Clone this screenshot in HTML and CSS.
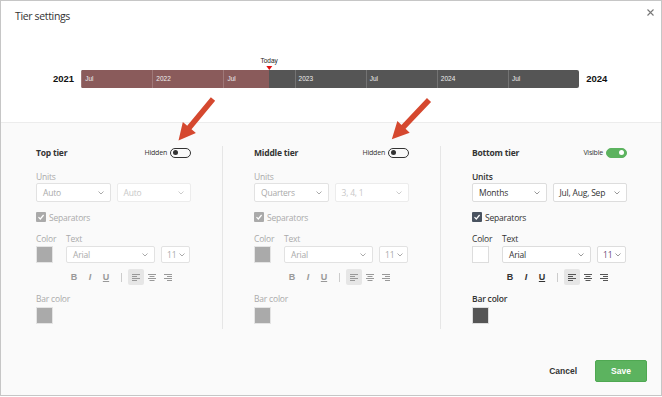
FILE: index.html
```html
<html>

<head>
    <link rel="stylesheet" href="styles.css">
</head>

<body>
    <div class="dialog">
        <div class="head">
            <div class="title">Tier settings</div>
            <svg class="close" width="7" height="7" viewBox="0 0 7 7"><path d="M0.5 0.5 L6.5 6.5 M6.5 0.5 L0.5 6.5" stroke="#777" stroke-width="1.1"/></svg>

            <div class="timeline">
                <span class="year">2021</span>
                <div class="bar">
                    <div class="progress" style="width:188px"></div>
                    <div class="today" style="left:188px"><span>Today</span><i></i></div>
                    <div class="seg">Jul</div>
                    <div class="seg">2022</div>
                    <div class="seg">Jul</div>
                    <div class="seg">2023</div>
                    <div class="seg">Jul</div>
                    <div class="seg">2024</div>
                    <div class="seg">Jul</div>
                </div>
                <span class="year year-end">2024</span>
            </div>
        </div>

        <div class="panel">
            <div class="tiers">

                <div class="tier off">
                    <div class="tier-head">
                        <span class="tier-name">Top tier</span>
                        <span class="state">Hidden <span class="toggle"></span></span>
                    </div>
                    <div class="lbl">Units</div>
                    <div class="sel-row">
                        <div class="sel">Auto<svg width="6" height="4"><path d="M0.5 0.5 L3 3 L5.5 0.5" fill="none" stroke="#aaa"/></svg></div>
                        <div class="sel faint">Auto<svg width="6" height="4"><path d="M0.5 0.5 L3 3 L5.5 0.5" fill="none" stroke="#ccc"/></svg></div>
                    </div>
                    <div class="check-row">
                        <span class="cb"><svg width="8" height="8"><polyline points="1.5,4.2 3.3,6 6.6,2" fill="none" stroke="#fff" stroke-width="1.2"/></svg></span>
                        <span>Separators</span>
                    </div>
                    <div class="lbl-row"><span class="lbl-color">Color</span><span>Text</span></div>
                    <div class="text-row">
                        <span class="swatch"></span>
                        <div class="sel font">Arial<svg width="6" height="4"><path d="M0.5 0.5 L3 3 L5.5 0.5" fill="none" stroke="#aaa"/></svg></div>
                        <div class="sel size">11<svg width="6" height="4"><path d="M0.5 0.5 L3 3 L5.5 0.5" fill="none" stroke="#aaa"/></svg></div>
                    </div>
                    <div class="fmt-row">
                        <span class="fb b">B</span>
                        <span class="fb i">I</span>
                        <span class="fb u">U</span>
                        <span class="fsep"></span>
                        <span class="fb active"><svg width="8" height="7"><path d="M0 0.5 H8 M0 2.5 H5 M0 4.5 H8 M0 6.5 H5" stroke="#999"/></svg></span>
                        <span class="fb"><svg width="8" height="7"><path d="M0 0.5 H8 M1.5 2.5 H6.5 M0 4.5 H8 M1.5 6.5 H6.5" stroke="#999"/></svg></span>
                        <span class="fb"><svg width="8" height="7"><path d="M0 0.5 H8 M3 2.5 H8 M0 4.5 H8 M3 6.5 H8" stroke="#999"/></svg></span>
                    </div>
                    <div class="lbl lbl-bar">Bar color</div>
                    <span class="swatch bar-swatch"></span>
                </div>

                <div class="tier off">
                    <div class="tier-head">
                        <span class="tier-name">Middle tier</span>
                        <span class="state">Hidden <span class="toggle"></span></span>
                    </div>
                    <div class="lbl">Units</div>
                    <div class="sel-row">
                        <div class="sel">Quarters<svg width="6" height="4"><path d="M0.5 0.5 L3 3 L5.5 0.5" fill="none" stroke="#aaa"/></svg></div>
                        <div class="sel faint">3, 4, 1<svg width="6" height="4"><path d="M0.5 0.5 L3 3 L5.5 0.5" fill="none" stroke="#ccc"/></svg></div>
                    </div>
                    <div class="check-row">
                        <span class="cb"><svg width="8" height="8"><polyline points="1.5,4.2 3.3,6 6.6,2" fill="none" stroke="#fff" stroke-width="1.2"/></svg></span>
                        <span>Separators</span>
                    </div>
                    <div class="lbl-row"><span class="lbl-color">Color</span><span>Text</span></div>
                    <div class="text-row">
                        <span class="swatch"></span>
                        <div class="sel font">Arial<svg width="6" height="4"><path d="M0.5 0.5 L3 3 L5.5 0.5" fill="none" stroke="#aaa"/></svg></div>
                        <div class="sel size">11<svg width="6" height="4"><path d="M0.5 0.5 L3 3 L5.5 0.5" fill="none" stroke="#aaa"/></svg></div>
                    </div>
                    <div class="fmt-row">
                        <span class="fb b">B</span>
                        <span class="fb i">I</span>
                        <span class="fb u">U</span>
                        <span class="fsep"></span>
                        <span class="fb active"><svg width="8" height="7"><path d="M0 0.5 H8 M0 2.5 H5 M0 4.5 H8 M0 6.5 H5" stroke="#999"/></svg></span>
                        <span class="fb"><svg width="8" height="7"><path d="M0 0.5 H8 M1.5 2.5 H6.5 M0 4.5 H8 M1.5 6.5 H6.5" stroke="#999"/></svg></span>
                        <span class="fb"><svg width="8" height="7"><path d="M0 0.5 H8 M3 2.5 H8 M0 4.5 H8 M3 6.5 H8" stroke="#999"/></svg></span>
                    </div>
                    <div class="lbl lbl-bar">Bar color</div>
                    <span class="swatch bar-swatch"></span>
                </div>

                <div class="tier on">
                    <div class="tier-head">
                        <span class="tier-name">Bottom tier</span>
                        <span class="state">Visible <span class="toggle"></span></span>
                    </div>
                    <div class="lbl">Units</div>
                    <div class="sel-row">
                        <div class="sel">Months<svg width="6" height="4"><path d="M0.5 0.5 L3 3 L5.5 0.5" fill="none" stroke="#999"/></svg></div>
                        <div class="sel">Jul, Aug, Sep<svg width="6" height="4"><path d="M0.5 0.5 L3 3 L5.5 0.5" fill="none" stroke="#999"/></svg></div>
                    </div>
                    <div class="check-row">
                        <span class="cb"><svg width="8" height="8"><polyline points="1.5,4.2 3.3,6 6.6,2" fill="none" stroke="#fff" stroke-width="1.2"/></svg></span>
                        <span>Separators</span>
                    </div>
                    <div class="lbl-row"><span class="lbl-color">Color</span><span>Text</span></div>
                    <div class="text-row">
                        <span class="swatch"></span>
                        <div class="sel font">Arial<svg width="6" height="4"><path d="M0.5 0.5 L3 3 L5.5 0.5" fill="none" stroke="#999"/></svg></div>
                        <div class="sel size">11<svg width="6" height="4"><path d="M0.5 0.5 L3 3 L5.5 0.5" fill="none" stroke="#999"/></svg></div>
                    </div>
                    <div class="fmt-row">
                        <span class="fb b">B</span>
                        <span class="fb i">I</span>
                        <span class="fb u">U</span>
                        <span class="fsep"></span>
                        <span class="fb active"><svg width="8" height="7"><path d="M0 0.5 H8 M0 2.5 H5 M0 4.5 H8 M0 6.5 H5" stroke="#555"/></svg></span>
                        <span class="fb"><svg width="8" height="7"><path d="M0 0.5 H8 M1.5 2.5 H6.5 M0 4.5 H8 M1.5 6.5 H6.5" stroke="#555"/></svg></span>
                        <span class="fb"><svg width="8" height="7"><path d="M0 0.5 H8 M3 2.5 H8 M0 4.5 H8 M3 6.5 H8" stroke="#555"/></svg></span>
                    </div>
                    <div class="lbl lbl-bar">Bar color</div>
                    <span class="swatch bar-swatch"></span>
                </div>

            </div>

            <div class="footer">
                <span class="cancel">Cancel</span>
                <span class="save">Save</span>
            </div>
        </div>

        <svg class="arrows" width="662" height="397">
            <polygon points="0,-2.8 37,-2.8 37,-8.5 54,0 37,8.5 37,2.8 0,2.8" fill="#d5482f" transform="translate(213 99) rotate(129.7)"/>
            <polygon points="0,-2.8 37,-2.8 37,-8.5 54,0 37,8.5 37,2.8 0,2.8" fill="#d5482f" transform="translate(429 100) rotate(133.5)"/>
        </svg>
    </div>
</body>

</html>
```

FILE: styles.css
```css
*{
    box-sizing: border-box;
}

body{
    margin: 0;
    font-family: "Open Sans", sans-serif;
    color: #333;
    background: #fff;
}

.dialog{
    position: relative;
    width: 662px;
    height: 396px;
    border: 1px solid #c6c6c6;
    display: flex;
    flex-direction: column;
    overflow: hidden;
}

.head{
    height: 121px;
    padding: 7px 14px 0;
    background: #fff;
}

.title{
    font-size: 10.5px;
    line-height: 16px;
    letter-spacing: -0.35px;
    color: #333;
}

.close{
    position: absolute;
    top: 8px;
    right: 7px;
}

.timeline{
    display: flex;
    align-items: center;
    margin: 46px 0 0 38px;
}

.year{
    font-family: "Liberation Sans", Arial, sans-serif;
    font-weight: bold;
    font-size: 9.5px;
    line-height: 18px;
    color: #111;
    margin-right: 7px;
}

.year-end{
    margin: 0 0 0 7px;
}

.bar{
    position: relative;
    display: flex;
    width: 498px;
    height: 18px;
    background: #555;
    border-radius: 2px;
}

.progress{
    position: absolute;
    left: 0;
    top: 0;
    bottom: 0;
    background: #8a5b5b;
    border-radius: 2px 0 0 2px;
}

.seg{
    position: relative;
    flex: 1;
    padding-left: 3px;
    font-family: "Liberation Sans", Arial, sans-serif;
    font-size: 6.5px;
    line-height: 18px;
    color: #eee;
    border-left: 1px solid rgba(255, 255, 255, 0.18);
}

.seg:first-of-type{
    border-left: none;
}

.today{
    position: absolute;
    bottom: 100%;
    display: flex;
    flex-direction: column;
    align-items: center;
    transform: translateX(-50%);
    z-index: 2;
}

.today span{
    font-family: "Liberation Sans", Arial, sans-serif;
    font-size: 6.5px;
    line-height: 7px;
    color: #222;
}

.today i{
    margin-top: 2px;
    width: 0;
    height: 0;
    border-top: 4px solid #e01010;
    border-left: 3px solid transparent;
    border-right: 3px solid transparent;
}

.panel{
    flex: 1;
    display: flex;
    flex-direction: column;
    background: #fafafa;
    border-top: 1px solid #ececec;
}

.tiers{
    display: flex;
    margin-top: 23px;
    padding-left: 35px;
}

.tier{
    flex: none;
    width: 218px;
    height: 183px;
    padding: 0 31px;
    border-left: 1px solid #e6e6e6;
    font-size: 8.5px;
    letter-spacing: -0.2px;
}

.tier:first-child{
    width: 186px;
    padding-left: 0;
    border-left: none;
}

.tier:last-child{
    width: 187px;
    padding-right: 0;
}

.tier-head{
    display: flex;
    justify-content: space-between;
    align-items: center;
    height: 13px;
}

.tier-name{
    font-weight: 700;
    color: #333;
}

.state{
    display: flex;
    align-items: center;
    font-size: 7px;
    color: #333;
}

.toggle{
    position: relative;
    display: inline-block;
    width: 21px;
    height: 10px;
    margin-left: 3px;
    border: 1.3px solid #333;
    border-radius: 5px;
}

.toggle::after{
    content: "";
    position: absolute;
    left: 2px;
    top: 1.2px;
    width: 5px;
    height: 5px;
    border-radius: 50%;
    background: #333;
}

.on .toggle{
    border-color: #5cb35f;
    background: #5cb35f;
}

.on .toggle::after{
    left: auto;
    right: 2px;
    background: #fff;
}

.lbl{
    margin-top: 12px;
    line-height: 12px;
    font-weight: 600;
}

.lbl-bar{
    margin-top: 8px;
}

.sel-row{
    display: flex;
    gap: 6px;
}

.sel{
    position: relative;
    flex: 1;
    height: 19px;
    padding-left: 6px;
    line-height: 17px;
    background: #fff;
    border: 1px solid #ddd;
    border-radius: 2px;
    color: #333;
}

.sel svg{
    position: absolute;
    right: 6px;
    top: 7px;
}

.check-row{
    display: flex;
    align-items: center;
    height: 12px;
    margin-top: 9px;
}

.cb{
    display: flex;
    align-items: center;
    justify-content: center;
    width: 10px;
    height: 10px;
    margin-right: 3px;
    border-radius: 1px;
    background: #4a5360;
}

.lbl-row{
    display: flex;
    margin-top: 10px;
    line-height: 12px;
}

.lbl-color{
    width: 30px;
}

.text-row{
    display: flex;
    margin-top: 1px;
}

.swatch{
    display: block;
    width: 17px;
    height: 17px;
    border: 1px solid #ddd;
    background: #fff;
}

.text-row .swatch{
    margin-right: 13px;
}

.text-row .sel{
    height: 17px;
    line-height: 15px;
}

.text-row .sel svg{
    top: 6px;
}

.sel.font{
    flex: none;
    width: 89px;
}

.sel.size{
    flex: none;
    width: 29px;
    margin-left: 6px;
    padding-left: 5px;
    color: #6d4d7a;
}

.sel.size svg{
    right: 4px;
}

.fmt-row{
    display: flex;
    align-items: center;
    height: 16px;
    margin-top: 6px;
    padding-left: 30px;
}

.fb{
    display: flex;
    align-items: center;
    justify-content: center;
    width: 16px;
    height: 16px;
    border-radius: 2px;
    font-family: "Liberation Sans", Arial, sans-serif;
    font-size: 9px;
    font-weight: bold;
    color: #333;
}

.fb.i{
    font-style: italic;
}

.fb.u{
    text-decoration: underline;
}

.fb.active{
    background: #e6e6e6;
}

.fsep{
    width: 1px;
    height: 9px;
    margin: 0 6px 0 7px;
    background: #ccc;
}

.bar-swatch{
    margin-top: 2px;
    background: #555;
    border-color: #ddd;
}

/* disabled tiers */
.off .lbl,
.off .lbl-row,
.off .check-row{
    color: #aaa;
    font-weight: 400;
}

.off .sel{
    color: #aaa;
    border-color: #e2e2e2;
}

.off .sel.faint{
    color: #c8c8c8;
    border-color: #ececec;
}

.off .cb{
    background: #aaa;
}

.off .swatch{
    background: #aaa;
    border-color: #e4e4e4;
}

.off .fb{
    color: #999;
}

.footer{
    display: flex;
    justify-content: flex-end;
    align-items: center;
    margin-top: auto;
    padding: 0 14px 13px 0;
}

.cancel{
    margin-right: 18px;
    font-family: "Liberation Sans", Arial, sans-serif;
    font-weight: bold;
    font-size: 8.5px;
    color: #333;
}

.save{
    width: 52px;
    height: 22px;
    line-height: 20px;
    text-align: center;
    font-family: "Liberation Sans", Arial, sans-serif;
    font-weight: bold;
    font-size: 8.5px;
    color: #fff;
    background: #5cb35f;
    border: 1px solid #4fa852;
    border-radius: 2px;
}

.arrows{
    position: absolute;
    left: -1px;
    top: -1px;
    pointer-events: none;
}
```
